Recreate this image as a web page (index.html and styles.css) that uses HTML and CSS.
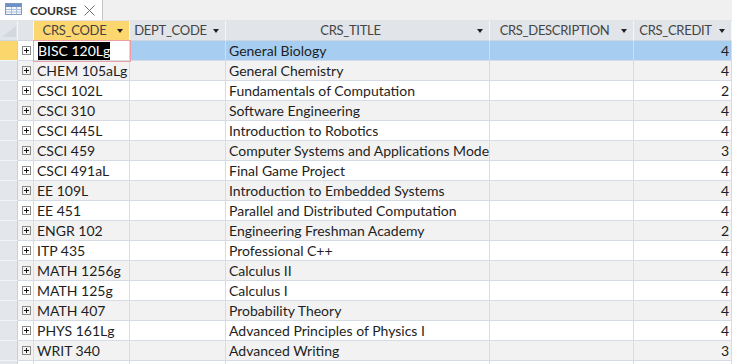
FILE: index.html
```html
<!DOCTYPE html>
<html lang="en">
<head>
    <meta charset="UTF-8">
    <title>COURSE</title>
    <link rel="stylesheet" href="styles.css">
</head>
<body>

    <!-- Document tab -->
    <div class="tabbar">
        <div class="tab">
            <svg class="tab-icon" width="17" height="12" viewBox="0 0 17 12">
                <rect x="0.5" y="0.5" width="16" height="11" fill="#f4f7fb" stroke="#7d98c2"/>
                <rect x="1" y="1" width="15" height="3" fill="#6f91c6"/>
                <path d="M1 6.5h15M1 9h15M6.5 4v7M11.5 4v7" stroke="#a9bcd8" fill="none"/>
            </svg>
            <span class="tab-label">COURSE</span>
            <svg class="tab-close" width="11" height="11" viewBox="0 0 11 11">
                <path d="M0.5 0.5l10 10M10.5 0.5l-10 10" stroke="#6e6e6e" fill="none"/>
            </svg>
        </div>
    </div>

    <!-- Datasheet -->
    <div class="sheet">
        <div class="row head">
            <div class="cell sel">
                <svg width="14" height="11" viewBox="0 0 14 11"><polygon points="0,11 14,0 14,11" fill="#d3d8df"/></svg>
            </div>
            <div class="cell exp"></div>
            <div class="cell hcell active"><span class="hlabel">CRS_CODE</span><span class="arrow"></span></div>
            <div class="cell hcell"><span class="hlabel">DEPT_CODE</span><span class="arrow"></span></div>
            <div class="cell hcell"><span class="hlabel">CRS_TITLE</span><span class="arrow"></span></div>
            <div class="cell hcell"><span class="hlabel">CRS_DESCRIPTION</span><span class="arrow"></span></div>
            <div class="cell hcell"><span class="hlabel">CRS_CREDIT</span><span class="arrow"></span></div>
        </div>

        <div class="row current">
            <div class="cell sel"></div>
            <div class="cell exp"><span class="plus"></span></div>
            <div class="cell focus"><span class="picked">BISC 120Lg</span></div>
            <div class="cell"></div>
            <div class="cell">General Biology</div>
            <div class="cell"></div>
            <div class="cell num">4</div>
        </div>
        <div class="row alt">
            <div class="cell sel"></div>
            <div class="cell exp"><span class="plus"></span></div>
            <div class="cell">CHEM 105aLg</div>
            <div class="cell"></div>
            <div class="cell">General Chemistry</div>
            <div class="cell"></div>
            <div class="cell num">4</div>
        </div>
        <div class="row">
            <div class="cell sel"></div>
            <div class="cell exp"><span class="plus"></span></div>
            <div class="cell">CSCI 102L</div>
            <div class="cell"></div>
            <div class="cell">Fundamentals of Computation</div>
            <div class="cell"></div>
            <div class="cell num">2</div>
        </div>
        <div class="row alt">
            <div class="cell sel"></div>
            <div class="cell exp"><span class="plus"></span></div>
            <div class="cell">CSCI 310</div>
            <div class="cell"></div>
            <div class="cell">Software Engineering</div>
            <div class="cell"></div>
            <div class="cell num">4</div>
        </div>
        <div class="row">
            <div class="cell sel"></div>
            <div class="cell exp"><span class="plus"></span></div>
            <div class="cell">CSCI 445L</div>
            <div class="cell"></div>
            <div class="cell">Introduction to Robotics</div>
            <div class="cell"></div>
            <div class="cell num">4</div>
        </div>
        <div class="row alt">
            <div class="cell sel"></div>
            <div class="cell exp"><span class="plus"></span></div>
            <div class="cell">CSCI 459</div>
            <div class="cell"></div>
            <div class="cell">Computer Systems and Applications Modeling</div>
            <div class="cell"></div>
            <div class="cell num">3</div>
        </div>
        <div class="row">
            <div class="cell sel"></div>
            <div class="cell exp"><span class="plus"></span></div>
            <div class="cell">CSCI 491aL</div>
            <div class="cell"></div>
            <div class="cell">Final Game Project</div>
            <div class="cell"></div>
            <div class="cell num">4</div>
        </div>
        <div class="row alt">
            <div class="cell sel"></div>
            <div class="cell exp"><span class="plus"></span></div>
            <div class="cell">EE 109L</div>
            <div class="cell"></div>
            <div class="cell">Introduction to Embedded Systems</div>
            <div class="cell"></div>
            <div class="cell num">4</div>
        </div>
        <div class="row">
            <div class="cell sel"></div>
            <div class="cell exp"><span class="plus"></span></div>
            <div class="cell">EE 451</div>
            <div class="cell"></div>
            <div class="cell">Parallel and Distributed Computation</div>
            <div class="cell"></div>
            <div class="cell num">4</div>
        </div>
        <div class="row alt">
            <div class="cell sel"></div>
            <div class="cell exp"><span class="plus"></span></div>
            <div class="cell">ENGR 102</div>
            <div class="cell"></div>
            <div class="cell">Engineering Freshman Academy</div>
            <div class="cell"></div>
            <div class="cell num">2</div>
        </div>
        <div class="row">
            <div class="cell sel"></div>
            <div class="cell exp"><span class="plus"></span></div>
            <div class="cell">ITP 435</div>
            <div class="cell"></div>
            <div class="cell">Professional C++</div>
            <div class="cell"></div>
            <div class="cell num">4</div>
        </div>
        <div class="row alt">
            <div class="cell sel"></div>
            <div class="cell exp"><span class="plus"></span></div>
            <div class="cell">MATH 1256g</div>
            <div class="cell"></div>
            <div class="cell">Calculus II</div>
            <div class="cell"></div>
            <div class="cell num">4</div>
        </div>
        <div class="row">
            <div class="cell sel"></div>
            <div class="cell exp"><span class="plus"></span></div>
            <div class="cell">MATH 125g</div>
            <div class="cell"></div>
            <div class="cell">Calculus I</div>
            <div class="cell"></div>
            <div class="cell num">4</div>
        </div>
        <div class="row alt">
            <div class="cell sel"></div>
            <div class="cell exp"><span class="plus"></span></div>
            <div class="cell">MATH 407</div>
            <div class="cell"></div>
            <div class="cell">Probability Theory</div>
            <div class="cell"></div>
            <div class="cell num">4</div>
        </div>
        <div class="row">
            <div class="cell sel"></div>
            <div class="cell exp"><span class="plus"></span></div>
            <div class="cell">PHYS 161Lg</div>
            <div class="cell"></div>
            <div class="cell">Advanced Principles of Physics I</div>
            <div class="cell"></div>
            <div class="cell num">4</div>
        </div>
        <div class="row alt">
            <div class="cell sel"></div>
            <div class="cell exp"><span class="plus"></span></div>
            <div class="cell">WRIT 340</div>
            <div class="cell"></div>
            <div class="cell">Advanced Writing</div>
            <div class="cell"></div>
            <div class="cell num">3</div>
        </div>
        <!-- new record row -->
        <div class="row">
            <div class="cell sel"></div>
            <div class="cell exp"></div>
            <div class="cell"></div>
            <div class="cell"></div>
            <div class="cell"></div>
            <div class="cell"></div>
            <div class="cell num"></div>
        </div>
    </div>

</body>
</html>
```

FILE: styles.css
```css
/* Page */
body {
    margin: 0;
    overflow: hidden;
    background: #fff;
    font-family: "Lato", "Liberation Sans", sans-serif;
    color: #1e1e1e;
}
/* Document tab strip */
.tabbar {
    display: flex;
    height: 20px;
    background: #f0f0f0;
    border-bottom: 1px solid #e4e4e4;
}
.tab {
    display: flex;
    align-items: center;
    width: 103px;
    box-sizing: border-box;
    padding-left: 5px;
    background: #fff;
    border-right: 1px solid #c6c6c6;
}
.tab-icon {
    flex: none;
    margin-top: -2px;
}
.tab-label {
    margin-left: 8px;
    font-size: 12px;
    font-weight: bold;
    letter-spacing: -0.2px;
    color: #303030;
}
.tab-close {
    flex: none;
    margin-left: auto;
    margin-right: 7px;
}
/* Datasheet grid */
.row {
    display: grid;
    grid-template-columns: 18px 16px 96px 96px 264px 144px 98px;
    height: 20px;
    background: #fff;
}
.row.alt {
    background: #f2f2f2;
}
.row.current {
    background: #a7cdf0;
}
.cell {
    box-sizing: border-box;
    height: 20px;
    padding: 0 3px;
    border-right: 1px solid #d5dce6;
    border-bottom: 1px solid #d5dce6;
    font-size: 14px;
    line-height: 19px;
    white-space: nowrap;
    overflow: hidden;
}
.cell.num {
    text-align: right;
    padding-right: 2px;
}
/* Record selector column */
.cell.sel {
    padding: 0;
    background: #e3e6eb;
    border-right-color: #c9cfd8;
    border-bottom-color: #f1f3f6;
}
.row.current .cell.sel {
    background: #fbd66d;
}
/* Subdatasheet expander */
.cell.exp {
    display: flex;
    align-items: center;
    justify-content: center;
    padding: 0 0 0 1px;
}
.row.current .cell.exp {
    background: #fff;
}
.plus {
    position: relative;
    width: 9px;
    height: 9px;
    box-sizing: border-box;
    border: 1px solid #8a8a8a;
}
.plus::before,
.plus::after {
    content: "";
    position: absolute;
    background: #111;
}
.plus::before {
    left: 1px;
    top: 3px;
    width: 5px;
    height: 1px;
}
.plus::after {
    left: 3px;
    top: 1px;
    width: 1px;
    height: 5px;
}
/* Focused cell */
.cell.focus {
    position: relative;
    z-index: 1;
    background: #fff;
    outline: 1px solid #ec9fa4;
    padding-left: 4px;
}
.picked {
    display: inline-block;
    vertical-align: top;
    margin-top: 1px;
    line-height: 18px;
    background: #000;
    color: #fff;
}
/* Column headers */
.row.head {
    background: #e1e4e9;
}
.row.head .cell {
    border-right-color: #f6f7f9;
    border-bottom-color: #d0d6df;
}
.row.head .cell.sel {
    display: flex;
    align-items: flex-end;
    justify-content: flex-end;
    padding: 0 1px 3px 0;
    background: #e1e4e9;
    border-right-color: #f6f7f9;
}
.hcell {
    display: flex;
    align-items: center;
    padding: 0;
    font-size: 13px;
    letter-spacing: -0.3px;
    color: #444;
}
.hcell.active {
    background: #fcd76f;
}
.hlabel {
    flex: 1;
    text-align: center;
    overflow: hidden;
}
.arrow {
    flex: none;
    margin: 1px 6px 0 2px;
    border-left: 3.5px solid transparent;
    border-right: 3.5px solid transparent;
    border-top: 4px solid #222;
}
```
